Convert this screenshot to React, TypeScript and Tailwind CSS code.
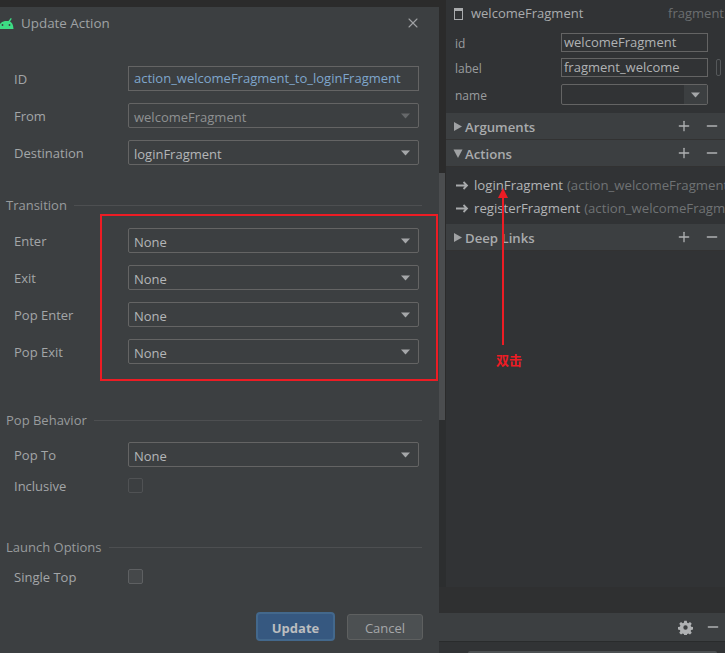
import { Minus, Plus, X } from "lucide-react";

const font = "font-['Open_Sans',sans-serif]";

function Caret({ dim }: { dim?: boolean }) {
  return (
    <svg width="11" height="6" viewBox="0 0 11 6" className={dim ? "opacity-40" : ""}>
      <path d="M1 0.5h9L5.5 5.5z" fill="#a5a7a9" />
    </svg>
  );
}

function Label({ children }: { children: string }) {
  return <span className="w-[128px] shrink-0 pl-[14px] text-[13px] leading-[18px] text-[#a3a6a8]">{children}</span>;
}

function Select({ value, dim }: { value: string; dim?: boolean }) {
  return (
    <div className="flex h-[25px] w-[291px] items-center justify-between rounded-[2px] border border-[#646464] bg-[#3c3f41] pl-[5px] pr-[7px]">
      <span className={`mt-[3px] text-[13px] leading-[16px] ${dim ? "text-[#8f9192]" : "text-[#b4b6b8]"}`}>{value}</span>
      <Caret dim={dim} />
    </div>
  );
}

function Row({ label, value, dim, className }: { label: string; value: string; dim?: boolean; className?: string }) {
  return (
    <div className={`flex h-[25px] items-center ${className ?? ""}`}>
      <Label>{label}</Label>
      <Select value={value} dim={dim} />
    </div>
  );
}

function Group({ title, className }: { title: string; className: string }) {
  return (
    <div className={`flex h-[18px] items-center gap-[7px] pl-[6px] pr-[17px] ${className}`}>
      <span className="text-[13px] leading-[18px] text-[#989b9d]">{title}</span>
      <div className="h-px flex-1 bg-[#4d4f51]" />
    </div>
  );
}

function CheckRow({ label, className, off }: { label: string; className: string; off?: boolean }) {
  return (
    <div className={`flex h-[15px] items-center ${className}`}>
      <Label>{label}</Label>
      <div
        className={`size-[15px] rounded-[2px] border ${off ? "border-[#505254] bg-[#3c3f41]" : "border-[#5e6062] bg-[#45484a]"}`}
      />
    </div>
  );
}

function Section({ title, open }: { title: string; open?: boolean }) {
  return (
    <div className="flex h-[27px] items-center border-b border-[#323232] bg-[#3c3f41] pl-[7px] pr-[5px]">
      <svg width="10" height="11" viewBox="0 0 10 11" className="mr-[2px]">
        {open ? <path d="M0.5 1.5h9L5 10z" fill="#a0a2a4" /> : <path d="M1 1l8 4.5L1 10z" fill="#a0a2a4" />}
      </svg>
      <span className="mt-[1px] text-[13.2px] leading-[18px] font-semibold text-[#a9abad]">{title}</span>
      <Plus size={16} strokeWidth={2} className="mt-[-1px] ml-auto text-[#afb1b3]" />
      <Minus size={16} strokeWidth={2} className="mt-[-1px] ml-[12px] text-[#afb1b3]" />
    </div>
  );
}

function ActionRow({ name, id }: { name: string; id: string }) {
  return (
    <div className="flex h-[23px] items-center whitespace-nowrap pl-[10px] text-[13.2px] leading-[18px]">
      <svg width="13" height="9" viewBox="0 0 13 9" className="mr-[5px] shrink-0">
        <path d="M0 4.500h11M7.500 1l3.500 3.500L7.500 8" fill="none" stroke="#a8aaac" strokeWidth="1.8" />
      </svg>
      <span className="text-[#b2b4b6]">{name}</span>
      <span className="ml-[4px] text-[#6f7274]">{id}</span>
    </div>
  );
}

function Field({ label, value, className }: { label: string; value?: string; className: string }) {
  return (
    <div className={`flex items-center ${className}`}>
      <span className="w-[115px] shrink-0 pl-[9px] pt-[2px] text-[12px] leading-[16px] text-[#9a9c9e]">{label}</span>
      <div className="flex h-[19px] w-[147px] items-center border border-[#646464] pl-[2px] text-[13px] text-[#b0b2b4]">
        {value}
      </div>
    </div>
  );
}

export default function App() {
  return (
    <div className={`relative flex h-[653px] w-[725px] overflow-hidden bg-[#2b2b2b] ${font}`}>
      {/* dialog */}
      <div className="mt-[7px] h-[646px] w-[439px] shrink-0 bg-[#3c3f41]">
        <div className="flex h-[32px] items-center">
          <svg width="14" height="11" viewBox="0 0 14 11" className="mt-[1px] shrink-0">
            <path d="M0 11V6C1 4.500 3 3.300 5 3h3.500L10.800 0l1 .7L10 3.500c1.800.8 3.300 3 3.500 7.500z" fill="#3ddc84" />
            <circle cx="9.500" cy="7" r="0.9" fill="#3c3f41" />
            <circle cx="2.500" cy="7" r="0.9" fill="#3c3f41" />
          </svg>
          <span className="ml-[7px] mt-[1px] text-[13.4px] text-[#9fa2a4]">Update Action</span>
          <X size={16} strokeWidth={1.6} className="ml-auto mr-[18px] text-[#a0a2a4]" />
        </div>

        <div className="mt-[27px] flex h-[25px] items-center">
          <Label>ID</Label>
          <div className="flex h-[25px] w-[291px] items-center border border-[#646464] pl-[5px] text-[13px] whitespace-nowrap text-[#7fa6cc]">
            action_welcomeFragment_to_loginFragment
          </div>
        </div>
        <Row label="From" value="welcomeFragment" dim className="mt-[12px]" />
        <Row label="Destination" value="loginFragment" className="mt-[12px]" />

        <Group title="Transition" className="mt-[31px]" />
        <Row label="Enter" value="None" className="mt-[14px]" />
        <Row label="Exit" value="None" className="mt-[12px]" />
        <Row label="Pop Enter" value="None" className="mt-[12px]" />
        <Row label="Pop Exit" value="None" className="mt-[12px]" />

        <Group title="Pop Behavior" className="mt-[47px]" />
        <Row label="Pop To" value="None" className="mt-[13px]" />
        <CheckRow label="Inclusive" off className="mt-[11px]" />

        <Group title="Launch Options" className="mt-[45px]" />
        <CheckRow label="Single Top" className="mt-[13px]" />

        <div className="mt-[28px] flex items-center justify-end pr-[16px]">
          <button className="h-[29px] w-[79px] rounded-[4px] border-2 border-[#43688c] bg-[#365880] pt-[2px] text-[13px] leading-[18px] font-bold text-[#bbbdbf]">
            Update
          </button>
          <button className="ml-[12px] h-[26px] w-[76px] rounded-[3px] border border-[#5e6060] bg-[#4c5052] pt-[2px] text-[13px] leading-[18px] text-[#a5a7a9]">
            Cancel
          </button>
        </div>
      </div>

      {/* scroll strip between dialog and panel, the bottom bars run under it */}
      <div className="flex w-[7px] shrink-0 flex-col pt-[173px]">
        <div className="h-[247px] w-[6px] shrink-0 bg-[#4b4d4f]" />
        <div className="flex-1 bg-[#2c2e2f]" />
        <div className="h-[26px] bg-[#2f3031]" />
        <div className="h-[29px] border-b border-[#292b2c] bg-[#3c3f41]" />
        <div className="h-[11px] bg-[#313335]" />
      </div>

      {/* attributes panel */}
      <div className="flex min-w-0 flex-1 flex-col bg-[#313335]">
        <div className="flex h-[27px] items-center overflow-hidden whitespace-nowrap pl-[8px]">
          <div className="h-[12px] w-[9px] shrink-0 border border-t-[3px] border-[#a9abad]" />
          <span className="ml-[8px] text-[13px] text-[#a9abad]">welcomeFragment</span>
          <span className="ml-auto pr-[1px] text-[13px] text-[#6b6e70]">fragment</span>
        </div>
        <Field label="id" value="welcomeFragment" className="mt-[6px]" />
        <div className="relative">
          <Field label="label" value="fragment_welcome" className="mt-[6px]" />
          <div className="absolute right-[4px] top-[7px] h-[17px] w-[5px] rounded-[2px] border border-[#55585a]" />
        </div>
        <div className="mt-[7px] flex items-center">
          <span className="w-[115px] shrink-0 pl-[9px] pt-[2px] text-[12px] leading-[16px] text-[#9a9c9e]">name</span>
          <div className="flex h-[21px] w-[147px] justify-end rounded-[2px] border border-[#646464]">
            <div className="flex w-[23px] items-center justify-center bg-[#3c3f41]">
              <Caret />
            </div>
          </div>
        </div>
        <div className="mt-[8px]">
          <Section title="Arguments" />
          <Section title="Actions" open />
        </div>
        <div className="flex h-[57px] flex-col justify-center pt-[2px]">
          <ActionRow name="loginFragment" id="(action_welcomeFragment_to_loginFragment)" />
          <ActionRow name="registerFragment" id="(action_welcomeFragment_to_registerFragment)" />
        </div>
        <Section title="Deep Links" />
        <div className="flex-1" />
        <div className="h-[26px] bg-[#2f3031]" />
        <div className="flex h-[29px] items-center justify-end border-b border-[#292b2c] bg-[#3c3f41] pr-[4px]">
          <svg width="15" height="15" viewBox="0 0 24 24" fill="#afb1b3">
            <path
              fillRule="evenodd"
              d="M10 1h4l.6 3.200 1.900.8 2.700-1.800 2.800 2.800-1.800 2.700.8 1.900 3 .6v4l-3 .6-.8 1.900 1.800 2.700-2.800 2.800-2.700-1.800-1.900.8-.6 3h-4l-.6-3-1.900-.8-2.700 1.800-2.800-2.800 1.800-2.700-.8-1.900-3-.6v-4l3-.6.8-1.900-1.800-2.700 2.800-2.800 2.700 1.800 1.900-.8zM12 8.500a3.500 3.500 0 1 0 0 7 3.500 3.500 0 0 0 0-7z"
            />
          </svg>
          <Minus size={16} strokeWidth={2} className="ml-[12px] text-[#afb1b3]" />
        </div>
        <div className="h-[11px] pl-[22px] pr-[8px] pt-[9px]">
          <div className="h-[2px] rounded-t-[2px] bg-[#4c5052]" />
        </div>
      </div>

      {/* annotations */}
      <div className="absolute left-[100px] top-[214px] h-[167px] w-[338px] border-2 border-[#ed1c24]" />
      <svg width="14" height="158" viewBox="0 0 14 158" className="absolute left-[496px] top-[188px]">
        <path d="M7 157V8" stroke="#ed1c24" strokeWidth="2" />
        <path d="M7 0l5 10H2z" fill="#ed1c24" />
      </svg>
      <span className="absolute left-[496px] top-[351px] text-[13px] leading-[18px] font-bold text-[#ed1c24] font-['Noto_Sans_CJK_SC',sans-serif]">
        双击
      </span>
    </div>
  );
}
